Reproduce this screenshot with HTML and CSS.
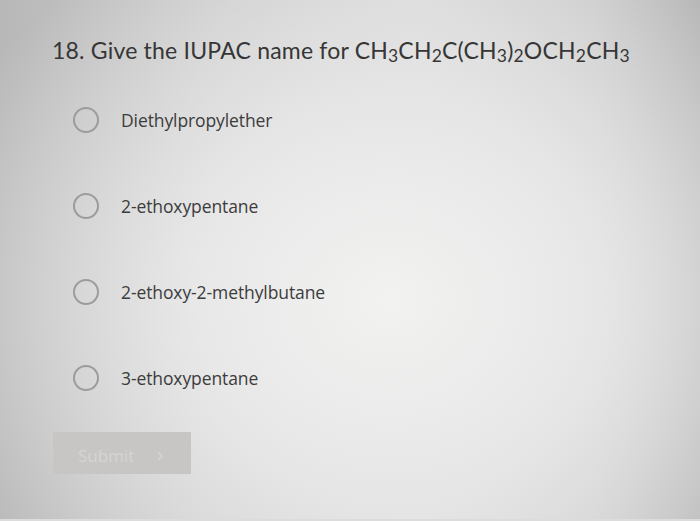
FILE: index.html
```html
<!DOCTYPE html>
<html>
<head>
<meta charset="utf-8">
<link rel="stylesheet" href="styles.css">
</head>
<body>
<div class="page">
  <h1 class="question">18. Give the IUPAC name for CH<sub>3</sub>CH<sub>2</sub>C(CH<sub>3</sub>)<sub>2</sub>OCH<sub>2</sub>CH<sub>3</sub></h1>
  <ul class="options">
    <li class="option"><span class="radio"></span><span class="label">Diethylpropylether</span></li>
    <li class="option"><span class="radio"></span><span class="label">2-ethoxypentane</span></li>
    <li class="option"><span class="radio"></span><span class="label">2-ethoxy-2-methylbutane</span></li>
    <li class="option"><span class="radio"></span><span class="label">3-ethoxypentane</span></li>
  </ul>
  <button class="submit">Submit <span class="chev">&#x203A;</span></button>
</div>
</body>
</html>
```
FILE: styles.css
```css
html, body {
  margin: 0;
  padding: 0;
  width: 700px;
  height: 521px;
  overflow: hidden;
}
body {
  background:
    linear-gradient(to top, #dcdcdc 0, #dcdcdc 2px, rgba(0,0,0,0) 2px),
    radial-gradient(ellipse 480px 420px at 390px 300px, #f2f2f1 0%, #e8e8e8 40%, rgba(205,205,205,0) 100%),
    linear-gradient(90deg, #b8b8b8 0%, #cacaca 30%, #d6d6d6 60%, #c8c8c8 85%, #b4b4b4 100%);
  font-family: "Open Sans", "Liberation Sans", sans-serif;
  color: #3a3a3a;
}
.page {
  padding: 35px 0 0 52px;
}
.question {
  margin: 0;
  font-family: Lato, "Open Sans", sans-serif;
  font-weight: 400;
  font-size: 23px;
  line-height: 30px;
  color: #363636;
  white-space: nowrap;
  letter-spacing: 0.2px;
}
.question sub {
  font-size: 17.5px;
  vertical-align: -3px;
  line-height: 0;
}
.options {
  list-style: none;
  margin: 42px 0 0 21px;
  padding: 0;
  display: flex;
  flex-direction: column;
  gap: 60px;
}
.option {
  display: flex;
  align-items: center;
  height: 26px;
  gap: 22px;
}
.radio {
  box-sizing: border-box;
  width: 26px;
  height: 26px;
  border: 2px solid #9c9c9c;
  border-radius: 50%;
  flex: none;
}
.label {
  font-size: 17.5px;
  color: #3c3c3c;
  letter-spacing: -0.1px;
  white-space: nowrap;
}
.submit {
  display: block;
  margin-top: 41px;
  margin-left: 1px;
  width: 138px;
  height: 42px;
  border: none;
  background: #c8c6c4;
  color: #d6d4d2;
  font-family: "Open Sans", sans-serif;
  font-size: 17px;
  text-align: left;
  padding: 0 0 0 25px;
}
.chev {
  margin-left: 18px;
  font-size: 22px;
}
```
